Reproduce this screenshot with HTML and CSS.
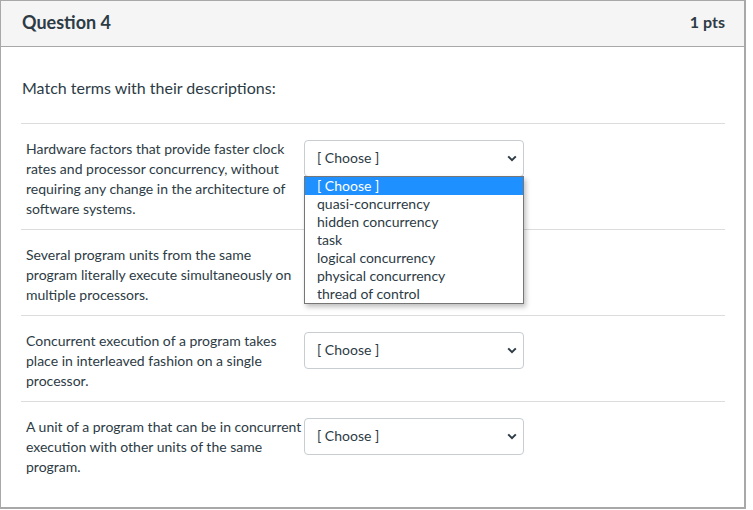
FILE: index.html
```html
<!DOCTYPE html>
<html lang="en">
<head>
<meta charset="utf-8">
<title>Question 4</title>
<link rel="stylesheet" href="styles.css">
</head>
<body>
<div class="card">
  <div class="card-header">
    <h2 class="title">Question 4</h2>
    <span class="pts">1 pts</span>
  </div>
  <div class="card-body">
    <p class="prompt">Match terms with their descriptions:</p>
    <div class="rows">
      <div class="row">
        <div class="desc">Hardware factors that provide faster clock rates and processor concurrency, without requiring any change in the architecture of software systems.</div>
        <div class="select-wrap">
          <div class="select">
            <span>[ Choose ]</span>
            <svg class="chev" width="10" height="7" viewBox="0 0 10 7"><path d="M1.2 1.4 L5 5.2 L8.8 1.4" fill="none" stroke="#2d3b45" stroke-width="2"/></svg>
          </div>
          <ul class="listbox">
            <li class="opt selected">[ Choose ]</li>
            <li class="opt">quasi-concurrency</li>
            <li class="opt">hidden concurrency</li>
            <li class="opt">task</li>
            <li class="opt">logical concurrency</li>
            <li class="opt">physical concurrency</li>
            <li class="opt">thread of control</li>
          </ul>
        </div>
      </div>
      <div class="row">
        <div class="desc">Several program units from the same program literally execute simultaneously on multiple processors.</div>
        <div class="select-wrap">
          <div class="select">
            <span>[ Choose ]</span>
            <svg class="chev" width="10" height="7" viewBox="0 0 10 7"><path d="M1.2 1.4 L5 5.2 L8.8 1.4" fill="none" stroke="#2d3b45" stroke-width="2"/></svg>
          </div>
        </div>
      </div>
      <div class="row">
        <div class="desc">Concurrent execution of a program takes place in interleaved fashion on a single processor.</div>
        <div class="select-wrap">
          <div class="select">
            <span>[ Choose ]</span>
            <svg class="chev" width="10" height="7" viewBox="0 0 10 7"><path d="M1.2 1.4 L5 5.2 L8.8 1.4" fill="none" stroke="#2d3b45" stroke-width="2"/></svg>
          </div>
        </div>
      </div>
      <div class="row">
        <div class="desc">A unit of a program that can be in concurrent execution with other units of the same program.</div>
        <div class="select-wrap">
          <div class="select">
            <span>[ Choose ]</span>
            <svg class="chev" width="10" height="7" viewBox="0 0 10 7"><path d="M1.2 1.4 L5 5.2 L8.8 1.4" fill="none" stroke="#2d3b45" stroke-width="2"/></svg>
          </div>
        </div>
      </div>
    </div>
  </div>
</div>
</body>
</html>
```

FILE: styles.css
```css
* { box-sizing: border-box; }
html, body { margin: 0; padding: 0; background: #fff; }
body {
  font-family: Lato, "Open Sans", Arial, sans-serif;
  color: #2d3b45;
}
.card {
  width: 746px;
  height: 509px;
  border: 1px solid #a8a8a8;
  border-right-width: 2px;
  border-bottom-width: 2px;
  background: #fff;
}
.card-header {
  height: 46px;
  background: #f5f5f5;
  border-bottom: 1px solid #a8a8a8;
  display: flex;
  align-items: center;
  justify-content: space-between;
  padding: 0 19px 3px 21px;
}
.title {
  margin: 0;
  font-size: 18px;
  font-weight: 700;
  line-height: 22px;
}
.pts {
  font-size: 16px;
  font-weight: 700;
  line-height: 20px;
  color: #2d3b45;
}
.card-body {
  padding: 0 19px 0 20px;
}
.prompt {
  margin: 0;
  padding: 30px 0 24px 1px;
  font-size: 16px;
  line-height: 22px;
}
.row {
  display: flex;
  align-items: flex-start;
  border-top: 1px solid #dcdcdc;
  padding: 15px 0 10px 5px;
}
.desc {
  width: 278px;
  font-size: 14px;
  line-height: 20px;
}
.select-wrap {
  position: relative;
  width: 220px;
  margin-top: 1px;
}
.select {
  height: 37px;
  border: 1px solid #c7cdd1;
  border-radius: 4px;
  background: #fff;
  display: flex;
  align-items: center;
  justify-content: space-between;
  padding: 0 6px 2px 12px;
  font-size: 14px;
}
.chev { display: block; margin-top: 2px; }
.listbox {
  position: absolute;
  left: 0;
  top: 36px;
  width: 220px;
  margin: 0;
  padding: 0;
  list-style: none;
  background: #fff;
  border: 1px solid #767676;
  box-shadow: 2px 3px 5px rgba(0,0,0,0.25);
  z-index: 2;
}
.opt {
  height: 18px;
  line-height: 18px;
  padding-left: 12px;
  font-size: 14px;
  color: #2d3b45;
}
.opt.selected {
  background: #1e90ff;
  color: #fff;
}
```
